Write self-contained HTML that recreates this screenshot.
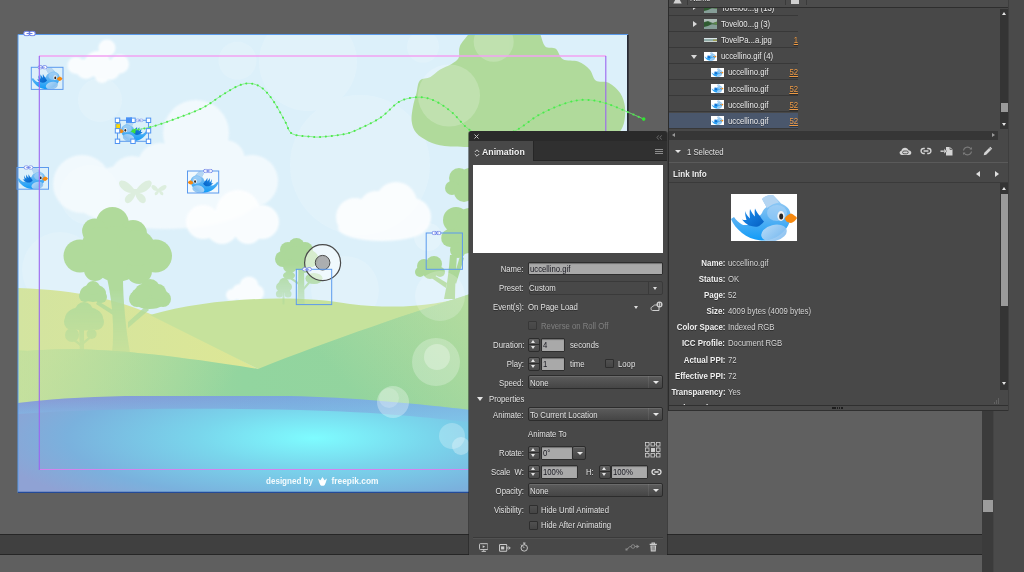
<!DOCTYPE html>
<html><head><meta charset="utf-8"><title>Animation</title>
<style>
*{box-sizing:border-box;margin:0;padding:0}
html,body{width:1024px;height:572px;overflow:hidden;background:#606060}
body{position:relative;font-family:"Liberation Sans",sans-serif;font-size:9px;color:#e2e2e2;line-height:1}
.a{position:absolute}
.t{position:absolute;white-space:nowrap;display:block;transform:scaleX(.86);transform-origin:0 50%;line-height:12px;height:12px;font-size:9px;text-shadow:0 1px 0 rgba(0,0,0,.4)}
.r{transform-origin:100% 50%;text-align:right}
.b{font-weight:bold}
.f{position:absolute;background:#a9a9a9;border:1px solid #2e2e2e;border-radius:1px;box-shadow:inset 0 1px 1px rgba(0,0,0,.35)}
.f .t{color:#1a1a22;text-shadow:none;left:.5px;top:0}
.dd{position:absolute;border:1px solid #2c2c2c;border-radius:2px;background:linear-gradient(90deg,transparent calc(100% - 14px),rgba(255,255,255,.07) calc(100% - 14px),rgba(255,255,255,.07) calc(100% - 13px),transparent calc(100% - 13px)),linear-gradient(#5c5c5c,#454545);box-shadow:inset 0 1px 0 rgba(255,255,255,.1)}
.dd .t{left:1px;top:.8px}
.dd i{position:absolute;right:2.8px;top:4.5px;border:3px solid transparent;border-top:3.5px solid #e8e8e8;border-bottom:0}
.st{position:absolute;width:12px;height:14px;border:1px solid #2c2c2c;border-radius:2px;background:linear-gradient(#606060,#4a4a4a)}
.st:before{content:"";position:absolute;left:2.5px;top:1.5px;border:2.5px solid transparent;border-bottom:3px solid #e4e4e4;border-top:0}
.st:after{content:"";position:absolute;left:2.5px;bottom:1.5px;border:2.5px solid transparent;border-top:3px solid #e4e4e4;border-bottom:0}
.cb{position:absolute;width:9px;height:9px;border:1px solid #2e2e2e;border-radius:1px;background:linear-gradient(#505050,#454545)}
.st i{position:absolute;left:0;right:0;top:5.5px;height:1px;background:#2c2c2c}
</style></head><body>
<!--ART-->
<svg class="a" style="left:18px;top:35px" width="610" height="457" viewBox="18 35 610 457">
<defs>
<filter id="bl1" x="-20%" y="-20%" width="140%" height="140%"><feGaussianBlur stdDeviation="2.2"/></filter>
<filter id="bl2" x="-20%" y="-20%" width="140%" height="140%"><feGaussianBlur stdDeviation="1"/></filter>
<radialGradient id="wg" cx="314" cy="438" r="330" gradientUnits="userSpaceOnUse" gradientTransform="translate(0 328.5) scale(1 0.25)">
<stop offset="0" stop-color="#7efcff"/><stop offset=".35" stop-color="#79d6ec"/><stop offset=".75" stop-color="#7ab1dd"/><stop offset="1" stop-color="#8fa2d4"/></radialGradient>
<linearGradient id="wt" x1="0" y1="0" x2="1" y2="0"><stop offset="0" stop-color="#8a97d3"/><stop offset=".45" stop-color="#7ba8dd"/><stop offset="1" stop-color="#7fbde4"/></linearGradient><linearGradient id="wf" x1="0" y1="0" x2="0" y2="1"><stop offset="0" stop-color="#7fc4e8" stop-opacity="0"/><stop offset="1" stop-color="#7fc8ea" stop-opacity=".85"/></linearGradient><linearGradient id="gr" gradientUnits="userSpaceOnUse" x1="480" y1="290" x2="360" y2="400"><stop offset="0" stop-color="#cfe39f" stop-opacity=".6"/><stop offset="1" stop-color="#cfe39f" stop-opacity="0"/></linearGradient><linearGradient id="gv" gradientUnits="userSpaceOnUse" x1="60" y1="340" x2="200" y2="430"><stop offset="0" stop-color="#cfe39f" stop-opacity=".6"/><stop offset="1" stop-color="#cfe39f" stop-opacity="0"/></linearGradient>
<linearGradient id="gg" x1="0" y1="0" x2="1" y2="0"><stop offset="0" stop-color="#b4dc9c"/><stop offset=".5" stop-color="#92d59f"/><stop offset="1" stop-color="#93d39d"/></linearGradient>
<linearGradient id="h1" x1="0" y1="0" x2="1" y2="0"><stop offset="0" stop-color="#d3e4a0"/><stop offset="1" stop-color="#dde796"/></linearGradient>
</defs>
<rect x="18" y="35" width="610" height="457" fill="#dcf0fa"/>
<!-- sky bokeh -->
<g fill="#fff" opacity=".15">
<circle cx="90" cy="195" r="30"/><circle cx="308" cy="62" r="49"/><circle cx="237.500" cy="60.700" r="19"/><circle cx="341.400" cy="160" r="22"/><circle cx="360" cy="165" r="70"/><circle cx="60" cy="270" r="38"/><circle cx="345" cy="290" r="34"/><circle cx="423" cy="46.600" r="16"/><circle cx="100" cy="100" r="22"/>
</g>
<!-- clouds -->
<g fill="#fff" filter="url(#bl2)" opacity=".62">
<circle cx="196" cy="133" r="33"/><circle cx="82" cy="184" r="29"/><circle cx="252" cy="181" r="26"/><circle cx="132" cy="178" r="22"/><ellipse cx="165" cy="195" rx="95" ry="34"/><circle cx="160" cy="165" r="22"/><circle cx="225" cy="160" r="20"/>
</g>
<g fill="#fff" filter="url(#bl2)" opacity=".85">
<circle cx="107" cy="48" r="8.500"/><circle cx="76" cy="65.500" r="8.500"/><circle cx="119.500" cy="64" r="9.500"/><circle cx="97.500" cy="64" r="13"/><circle cx="102" cy="76" r="7"/><circle cx="86" cy="69" r="10"/><circle cx="110" cy="70" r="10"/>
<circle cx="203" cy="222" r="17"/><circle cx="238" cy="212" r="22"/><circle cx="262" cy="222" r="17"/><circle cx="222" cy="228" r="16"/><circle cx="248" cy="230" r="14"/>
<circle cx="240" cy="292" r="8"/><circle cx="249" cy="286" r="9.500"/><circle cx="256" cy="293" r="8"/><circle cx="232" cy="295" r="6"/><circle cx="246" cy="297" r="7"/>
<circle cx="355" cy="217" r="19"/><circle cx="396" cy="203" r="21"/><circle cx="376" cy="208" r="17"/><circle cx="412" cy="217" r="19"/><ellipse cx="382" cy="228" rx="44" ry="13"/>
</g>
<g fill="#b9dca6" opacity=".35"><g transform="translate(134 189) scale(1.35) translate(-128 -190)"><path d="M128 190c-4-6-10-8-11-5s4 8 9 8c-4 1-6 5-4 7s6-2 7-6c1 4 5 8 7 6s0-6-4-7c5 0 10-5 9-8s-7-1-11 5z"/></g><path d="M158 189c-2-4-6-5-6.500-3s2 5 5.500 5c-2 .5-3 3-2 4s3.500-1 4-3.500c.5 2.500 3 4.500 4 3.500s0-3.500-2-4c3 0 6-3 5.500-5s-4.500-1-8.500 3z"/></g>
<!-- big tree top right -->
<path d="M469 147C464.9 146.8 451.4 146.9 444.6 146C437.9 145.1 433.2 143.7 428.5 141.5C423.8 139.3 419.2 136.4 416.4 133.1C413.6 129.8 412.3 125.7 411.7 121.4C411.1 117.1 412.1 112.0 412.9 107.3C413.7 102.6 415.2 97.8 416.4 93.3C417.6 88.8 417.5 83.1 419.9 80.4C422.2 77.7 427.2 78.7 430.5 76.9C433.8 75.1 436.3 72.0 439.8 69.8C443.3 67.6 448.5 66.0 451.6 64C454.7 62.0 457.2 61.0 458.6 58.1C460.0 55.2 458.2 50.2 459.8 46.4C461.4 42.5 466.6 36.9 468 35L540.6 35C541.4 36.9 542.8 44.1 545.3 46.4C547.8 48.7 552.9 46.6 555.8 48.7C558.7 50.9 559.2 57.1 562.9 59.3C566.6 61.4 573.6 59.9 578.1 61.6C582.6 63.4 586.9 66.7 589.8 69.8C592.7 72.9 592.6 78.2 595.7 80.4C598.8 82.6 604.5 80.6 608.6 82.7C612.7 84.8 617.6 89.2 620.3 93.3C623.0 97.4 624.4 102.2 625 107.3C625.6 112.4 625.0 119.1 623.8 123.7C622.6 128.3 620.3 130.6 618 135C615.7 139.4 611.3 147.5 610 150L610 200L469 200z" fill="#b0da9b"/>
<g fill="#fff" opacity=".2"><circle cx="449" cy="95.500" r="31"/><circle cx="493.700" cy="41.700" r="20"/></g>
<g fill="#acd898">
<circle cx="459" cy="178" r="10"/><circle cx="452" cy="188" r="7"/><circle cx="464" cy="192" r="10"/><circle cx="470" cy="180" r="12"/>
<circle cx="456" cy="220" r="13"/><circle cx="450" cy="238" r="9"/><circle cx="463" cy="240" r="14"/><circle cx="470" cy="222" r="14"/><circle cx="458" cy="250" r="8"/>
<circle cx="424" cy="266" r="7"/><circle cx="434" cy="264" r="8"/><circle cx="420" cy="272" r="5"/><circle cx="440" cy="272" r="5"/><circle cx="430" cy="272" r="7"/>
<path d="M450 255 L457 255 C456 270 455 285 455 299 L444 299 C447 285 449 270 450 255z"/><path d="M432 274 L447 283 L446 288 L430 277z"/><path d="M464 258 L456 284 L453 280 L460 256z"/>
</g>
<circle cx="428" cy="237" r="14" fill="#fff" opacity=".22"/>
<!-- hills -->
<path d="M18 288 C80 290 120 300 160 318 C200 336 230 355 258 369 L18 369z" fill="url(#h1)"/>
<path d="M150 315 C210 298 290 294 350 304 C400 310 440 305 470 295 L470 420 L18 420 L18 350 L258 369z" fill="#c6e29c"/>
<path d="M18 352 C80 345 150 352 258 369 C330 340 420 310 470 294 L470 420 L18 420z" fill="url(#gg)"/>
<!-- trees -->
<linearGradient id="tf" gradientUnits="userSpaceOnUse" x1="0" y1="290" x2="0" y2="358"><stop offset="0" stop-color="#fff"/><stop offset="1" stop-color="#555"/></linearGradient><linearGradient id="tf2" gradientUnits="userSpaceOnUse" x1="0" y1="265" x2="0" y2="306"><stop offset="0" stop-color="#fff"/><stop offset="1" stop-color="#666"/></linearGradient><mask id="fm2" maskUnits="userSpaceOnUse" x="260" y="230" width="80" height="80"><rect x="260" y="230" width="80" height="80" fill="url(#tf2)"/></mask><mask id="fm" maskUnits="userSpaceOnUse" x="18" y="200" width="300" height="200"><rect x="18" y="200" width="300" height="200" fill="url(#tf)"/></mask>
<g fill="#b0da9b">
<circle cx="112.400" cy="223.500" r="16.500"/><circle cx="94.600" cy="231" r="12.500"/><circle cx="133" cy="234" r="14"/><circle cx="80" cy="256" r="16.500"/><circle cx="155.500" cy="256" r="16.500"/><circle cx="117" cy="254" r="28"/><circle cx="95" cy="270" r="11"/><circle cx="139" cy="271" r="13"/><circle cx="100" cy="245" r="18"/><circle cx="137" cy="248" r="18"/>
<ellipse cx="93" cy="293" rx="13" ry="9"/><circle cx="85" cy="296" r="6"/><circle cx="101" cy="297" r="6"/><circle cx="93" cy="288" r="7"/>
<ellipse cx="149.600" cy="297" rx="19" ry="12"/><circle cx="150" cy="289" r="10"/><circle cx="137" cy="299" r="8"/><circle cx="163" cy="299" r="8"/><circle cx="143" cy="292" r="8"/><circle cx="158" cy="292" r="8"/>
</g>
<g fill="#b0da9b" mask="url(#fm)">
<path d="M107 278 L123 278 C123 300 126 330 130 353 L112 353 C115 330 112 300 107 278z"/>
<path d="M98 301 L116 312 L116 317 L96 304z"/><path d="M146 306 L128 322 L128 328 L149 310z"/>
<ellipse cx="84" cy="318.400" rx="19" ry="12"/><circle cx="84" cy="311" r="9"/><circle cx="72" cy="322" r="8"/><circle cx="96" cy="322" r="8"/><circle cx="72" cy="335" r="7"/><circle cx="91.600" cy="334" r="5"/>
<path d="M79 326 L84 326 L84 357 L80 357z"/><path d="M72 337l8 6v3l-9-7zM91 335l-7 6v3l8-7z"/>
</g>
<g fill="#acd89a" mask="url(#fm2)">
<circle cx="296.500" cy="246" r="8"/><circle cx="288" cy="250" r="8"/><circle cx="305" cy="250" r="8"/><circle cx="283" cy="259" r="8"/><circle cx="310" cy="259" r="8.500"/><circle cx="296.500" cy="258" r="12"/><circle cx="290" cy="266" r="7"/><circle cx="304" cy="266" r="7"/>
<path d="M298.500 266 L304 266 L304.500 304 L297.500 304z"/>
<ellipse cx="289" cy="275.500" rx="6" ry="4"/><ellipse cx="314" cy="278.500" rx="8.600" ry="5.500"/><path d="M291 277l7 5v2.500l-8-5.500zM311 282l-7 8v-3l5-6z"/>
<ellipse cx="284" cy="287" rx="8" ry="6"/><circle cx="284" cy="283" r="5"/><circle cx="279.400" cy="294" r="3.500"/><circle cx="288" cy="294" r="3.500"/><path d="M282.500 290h2v14.500h-2z"/>
</g>

<path d="M18 352 C80 345 150 352 258 369 C330 340 420 310 470 294 L470 420 L18 420z" fill="url(#gv)"/>
<path d="M258 369 C330 340 420 310 470 294 L470 420 L258 420z" fill="url(#gr)"/>
<!-- water -->
<path d="M18 403 C60 398 100 396 140 396 L290 396 C350 397 420 404 470 410 L628 410 L628 492 L18 492z" fill="url(#wt)"/>
<path d="M18 403 C60 398 100 396 140 396 L290 396 C350 397 420 404 470 410 L470 424 L18 416z" fill="url(#wf)"/>
<path d="M18 414 C100 408 200 408 300 410 C380 412 430 418 470 422 L628 422 L628 492 L18 492z" fill="url(#wg)"/>
<!-- bokeh right -->
<g fill="#fff">
<circle cx="436" cy="362" r="24" opacity=".25"/><circle cx="437" cy="357" r="13" opacity=".3"/>
<circle cx="393" cy="402" r="16" opacity=".3"/><circle cx="389" cy="398" r="10" opacity=".2"/>
<circle cx="452" cy="436" r="13" opacity=".25"/><circle cx="461" cy="446" r="9" opacity=".3"/>
<circle cx="440" cy="296" r="25" opacity=".2"/>
</g>
</svg>
<!--STRIPS-->
<div class="a" style="left:0;top:534px;width:982px;height:21px;background:#404040;border-top:1px solid #262626;border-bottom:1px solid #262626"></div>
<div class="a" style="left:0;top:555px;width:982px;height:17px;background:#5f5f5f"></div>
<div class="a" style="left:982px;top:405px;width:12px;height:167px;background:#3b3b3b;border-right:1px solid #444"></div>
<div class="a" style="left:983px;top:500px;width:10px;height:12px;background:#9c9c9c"></div>
<div class="a" style="left:994px;top:0;width:30px;height:572px;background:#4a4a4a"></div>
<!--OVERLAY-->
<svg class="a" style="left:0;top:0" width="1024" height="572" viewBox="0 0 1024 572">
<defs>
<linearGradient id="bb" x1="0" y1="0" x2="0" y2="1"><stop offset="0" stop-color="#a6d2f5"/><stop offset=".5" stop-color="#5cb3f3"/><stop offset="1" stop-color="#109bf8"/></linearGradient>
<linearGradient id="bw" x1="0" y1="0" x2="1" y2="1"><stop offset="0" stop-color="#1e90ee"/><stop offset="1" stop-color="#0560c4"/></linearGradient>
<linearGradient id="bl" x1="0" y1="0" x2="1" y2="1"><stop offset="0" stop-color="#c4e0f8"/><stop offset="1" stop-color="#7ab8ee"/></linearGradient>
<symbol id="bird" viewBox="0 0 66 47">
<path d="M0 25L3 23C5 26 8 29 11 30.500 13 31.500 17 31 20 30 24 27 29 22 31 19 32 16 34 14 35.500 13L31 5C33 2.500 37 .5 42 1 45 4 48 7 50 9.500 56 12 60 16 59.500 22 59.500 29 56 35 50 40 44 45 36 47 30 46.500 22 45.500 16 43 11 39 6 35 2 30 0 25z" fill="url(#bb)"/>
<path d="M31 5C33 2.500 37 .5 42 1 44 3 46 6 48 8.500 44 9 40 11 36 14z" fill="#b4d5f2"/>
<path d="M14 17C15 20 17 22.500 19 24.500 18.500 21 18.500 18 19 15 20.500 18 22 20.500 24 22.500 23.500 19.500 23.500 17 24 14.500 25.500 17.500 27 20 29 22 30 24 31.500 26 33 27.500 31 30 29 31.500 27 32.500 24 33 21 32.500 18 31.500 15.500 30 13 28 11 25.500 12.500 26 14 26.200 15.500 26 14.500 23 14 20 14 17z" fill="url(#bw)"/>
<ellipse cx="43" cy="39" rx="13" ry="8" transform="rotate(-14 43 39)" fill="url(#bl)" opacity=".9"/>
<ellipse cx="46" cy="19" rx="10" ry="8" fill="#b0d6f6" opacity=".55"/>
<ellipse cx="50" cy="22" rx="3.600" ry="5" fill="#f2f2f2"/><ellipse cx="50.200" cy="22.500" rx="2" ry="3" fill="#262626"/>
<path d="M54 24C56 21.500 58 20 60 19.500 62.500 20.500 64.500 22 66 24 64.500 26.500 62.500 28.200 60 29 58 28.800 56 28 55 27 54.300 26 54 25 54 24z" fill="#f7890f"/>
</symbol>
<symbol id="lnk" viewBox="0 0 11 5"><rect x=".6" y=".6" width="5" height="3.800" rx="1.900" fill="#fff" stroke="#6a7fe8" stroke-width=".9"/><rect x="5.400" y=".6" width="5" height="3.800" rx="1.900" fill="#fff" stroke="#6a7fe8" stroke-width=".9"/><path d="M3 2.500h5" stroke="#6a7fe8" stroke-width=".9"/></symbol>
</defs>
<path d="M18 492.500V34.500H628" fill="none" stroke="#5a9aea" stroke-width="1"/>
<path d="M18 492.300H628" fill="none" stroke="#234a98" stroke-width="1.200"/>
<path d="M627.800 35V493" fill="none" stroke="#0a0a14" stroke-width="1.300"/>
<use href="#lnk" x="23" y="30.500" width="13" height="6"/>
<g font-family="Liberation Sans, sans-serif" font-weight="bold" font-size="8.500" fill="#fff" opacity=".92"><text x="266" y="484" textLength="47" lengthAdjust="spacingAndGlyphs">designed by</text><text x="331.500" y="484" textLength="47" lengthAdjust="spacingAndGlyphs">freepik.com</text></g>
<path d="M319.500 483.500l-1.500-5 2.500 1.800 2-3.300 2 3.300 2.500-1.800-1.500 5z" fill="#fff" opacity=".95"/><circle cx="322.500" cy="483.200" r="2.600" fill="#fff"/>
<circle cx="322.600" cy="262.700" r="18" fill="rgba(255,255,255,.5)" stroke="#4a4a4a" stroke-width="1.200"/><circle cx="322.600" cy="262.700" r="7.300" fill="rgba(150,150,150,.75)" stroke="#4a4a4a" stroke-width="1"/>
<rect x="296.3" y="269.3" width="35.4" height="35.3" fill="none" stroke="#5b9aee" stroke-width="1"/>
<use href="#lnk" x="302" y="267.0" width="10" height="4.600"/>
<rect x="426.2" y="233" width="36.2" height="36.3" fill="none" stroke="#5b9aee" stroke-width="1"/>
<use href="#lnk" x="431.5" y="230.7" width="10" height="4.600"/>
<use href="#bird" x="31.3" y="67.3" width="31.7" height="22.1" preserveAspectRatio="none"/><rect x="31.3" y="67.3" width="31.7" height="22.1" fill="none" stroke="#5b9aee" stroke-width="1"/><use href="#lnk" x="37.5" y="65.0" width="10" height="4.600"/>
<use href="#bird" x="17" y="167.5" width="31.5" height="21.7" preserveAspectRatio="none"/><rect x="17" y="167.5" width="31.5" height="21.7" fill="none" stroke="#5b9aee" stroke-width="1"/><use href="#lnk" x="23.5" y="165.2" width="10" height="4.600"/>
<g transform="translate(406.2 0) scale(-1 1)"><use href="#bird" x="187.5" y="171" width="31.2" height="22.0" preserveAspectRatio="none"/></g><rect x="187.5" y="171" width="31.2" height="22.0" fill="none" stroke="#5b9aee" stroke-width="1"/><use href="#lnk" x="203" y="168.7" width="10" height="4.600"/>
<path d="M39 56H606" stroke="#f2a2f2" stroke-width="1.500" fill="none"/>
<path d="M39 469.500H606" stroke="#d384ee" stroke-width="1.200" fill="none"/>
<path d="M39.300 56V470M605.800 56V470" stroke="#9a66f0" stroke-width="1.100" fill="none"/>
<g transform="translate(266.0 0) scale(-1 1)"><use href="#bird" x="117.5" y="120.3" width="31.0" height="21.0" preserveAspectRatio="none"/></g><rect x="117.5" y="120.3" width="31.0" height="21.0" fill="none" stroke="#5b9aee" stroke-width="1"/>
<path d="M132.8 130.3C135.9 129.7 144.2 128.8 151.6 126.8C159.0 124.8 168.7 121.3 177.3 118.1C185.9 114.9 195.7 111.4 203.1 107.6C210.5 103.8 216.0 98.8 221.9 95.2C227.8 91.6 233.6 87.8 238.3 85.8C243.0 83.8 246.1 83.1 250 83.4C253.9 83.7 257.8 84.8 261.7 87.7C265.6 90.6 269.5 95.4 273.4 101C277.3 106.6 282.0 115.9 285.1 121.4C288.2 126.9 287.9 131.3 292.2 133.8C296.5 136.3 306.3 136.1 310.9 136.6C315.5 137.1 315.3 137.3 320 137C324.7 136.7 333.5 135.9 339 135C344.5 134.1 346.4 134.2 353.2 131.4C360.0 128.6 372.1 123.1 379.8 118.1C387.6 113.1 393.1 105.0 399.7 101.5C406.3 98.0 413.5 97.2 419.6 97.2C425.7 97.2 430.7 98.8 436.2 101.5C441.7 104.2 447.3 108.4 452.8 113.1C458.3 117.8 462.9 125.5 469.4 129.7C475.9 133.8 484.2 137.9 492 138C499.8 138.1 508.0 134.3 515.9 130.4C523.8 126.5 530.8 119.3 539.1 114.8C547.4 110.3 558.0 105.7 565.7 103.2C573.5 100.7 579.0 99.8 585.6 99.8C592.2 99.8 598.3 101.1 605.5 103.2C612.7 105.3 622.4 109.8 628.8 112.5C635.2 115.2 641.2 118.0 643.7 119.1" fill="none" stroke="#74ec74" stroke-width=".8"/>
<path d="M132.8 130.3C135.9 129.7 144.2 128.8 151.6 126.8C159.0 124.8 168.7 121.3 177.3 118.1C185.9 114.9 195.7 111.4 203.1 107.6C210.5 103.8 216.0 98.8 221.9 95.2C227.8 91.6 233.6 87.8 238.3 85.8C243.0 83.8 246.1 83.1 250 83.4C253.9 83.7 257.8 84.8 261.7 87.7C265.6 90.6 269.5 95.4 273.4 101C277.3 106.6 282.0 115.9 285.1 121.4C288.2 126.9 287.9 131.3 292.2 133.8C296.5 136.3 306.3 136.1 310.9 136.6C315.5 137.1 315.3 137.3 320 137C324.7 136.7 333.5 135.9 339 135C344.5 134.1 346.4 134.2 353.2 131.4C360.0 128.6 372.1 123.1 379.8 118.1C387.6 113.1 393.1 105.0 399.7 101.5C406.3 98.0 413.5 97.2 419.6 97.2C425.7 97.2 430.7 98.8 436.2 101.5C441.7 104.2 447.3 108.4 452.8 113.1C458.3 117.8 462.9 125.5 469.4 129.7C475.9 133.8 484.2 137.9 492 138C499.8 138.1 508.0 134.3 515.9 130.4C523.8 126.5 530.8 119.3 539.1 114.8C547.4 110.3 558.0 105.7 565.7 103.2C573.5 100.7 579.0 99.8 585.6 99.8C592.2 99.8 598.3 101.1 605.5 103.2C612.7 105.3 622.4 109.8 628.8 112.5C635.2 115.2 641.2 118.0 643.7 119.1" fill="none" stroke="#4ce94c" stroke-width="2" stroke-linecap="round" stroke-dasharray="0.1 5.800"/>
<circle cx="643.700" cy="119.100" r="1.800" fill="#2fe62f"/>
<path d="M130.500 131.600l5.500-3.600-.8 5.800z" fill="#3fe03f"/>
<use href="#lnk" x="135.500" y="118.200" width="8" height="4.200" opacity=".8"/>
<rect x="115.3" y="118.1" width="4.400" height="4.400" fill="#fff" stroke="#4f93f2" stroke-width="1"/>
<rect x="115.3" y="128.6" width="4.400" height="4.400" fill="#fff" stroke="#4f93f2" stroke-width="1"/>
<rect x="115.3" y="139.1" width="4.400" height="4.400" fill="#fff" stroke="#4f93f2" stroke-width="1"/>
<rect x="130.8" y="118.1" width="4.400" height="4.400" fill="#fff" stroke="#4f93f2" stroke-width="1"/>
<rect x="130.8" y="139.1" width="4.400" height="4.400" fill="#fff" stroke="#4f93f2" stroke-width="1"/>
<rect x="146.3" y="118.1" width="4.400" height="4.400" fill="#fff" stroke="#4f93f2" stroke-width="1"/>
<rect x="146.3" y="128.6" width="4.400" height="4.400" fill="#fff" stroke="#4f93f2" stroke-width="1"/>
<rect x="146.3" y="139.1" width="4.400" height="4.400" fill="#fff" stroke="#4f93f2" stroke-width="1"/>
<rect x="126" y="117.300" width="6" height="5.600" fill="#4a92f6"/>
<rect x="115.800" y="123.800" width="4.600" height="4.600" fill="#ffd800" stroke="#4f93f2" stroke-width=".8"/>
</svg>
<!--ANIM-->
<div class="a" id="anim" style="left:469px;top:131px;width:198px;height:424px;background:#484848;border-radius:3px 3px 0 0;overflow:hidden;box-shadow:-1px 0 0 rgba(30,30,30,.5),1px 0 0 rgba(30,30,30,.5)">
<div class="a" style="left:0;top:0;width:198px;height:10px;background:#2a2a2a"></div>
<div class="a" style="left:64px;top:10px;width:134px;height:20px;background:#303030;border-bottom:1px solid #262626;border-left:1px solid #262626"></div>
<svg class="a" style="left:4px;top:2px" width="8" height="7" viewBox="0 0 8 7"><path d="M1.5 1.5 L5.5 5.5 M5.5 1.5 L1.5 5.5" stroke="#c4c4c4" stroke-width="1" fill="none"/></svg>
<svg class="a" style="left:187px;top:3.500px" width="7" height="5" viewBox="0 0 8 6"><path d="M3 .5 L1 3 L3 5.5 M6.5 .5 L4.5 3 L6.5 5.5" stroke="#787878" stroke-width="1" fill="none"/></svg>
<svg class="a" style="left:5px;top:17.500px" width="6" height="8" viewBox="0 0 6 8"><path d="M.8 3 L3 .8 L5.2 3 M.8 5 L3 7.2 L5.2 5" stroke="#cccccc" stroke-width="1" fill="none"/></svg>
<span class="t b" style="left:13px;top:14.800px;font-size:9.5px;transform:scaleX(.92);color:#f0f0f0">Animation</span>
<div class="a" style="left:186px;top:18px;width:8px;height:1px;background:#8c8c8c;box-shadow:0 2px 0 #8c8c8c,0 4px 0 #8c8c8c"></div>
<div class="a" style="left:4px;top:34px;width:190px;height:88px;background:#fff"></div>
<span class="t r " style="right:143px;top:131.5px;">Name:</span>
<div class="f" style="left:59.3px;top:130.8px;width:134.7px;height:13.5px"><span class="t" style="top:0px">uccellino.gif</span></div>
<span class="t r " style="right:143px;top:151.0px;">Preset:</span>
<div class="a" style="left:60px;top:150px;width:134px;height:14px;border:1px solid #3a3a3a;border-radius:2px"></div><div class="a" style="left:179px;top:151px;width:1px;height:12px;background:#3a3a3a"></div><i class="a" style="left:184px;top:156px;border:2.5px solid transparent;border-top:3px solid #ddd;border-bottom:0"></i>
<span class="t " style="left:60px;top:151.0px;">Custom</span>
<span class="t r " style="right:143px;top:170.0px;">Event(s):</span>
<span class="t " style="left:59px;top:170.0px;">On Page Load</span>
<i class="a" style="left:165px;top:175px;border:2.5px solid transparent;border-top:3px solid #ddd;border-bottom:0"></i>
<svg class="a" style="left:181px;top:170px" width="13" height="11" viewBox="0 0 13 11"><path d="M1 7.5c0-1.2 1-2 2-2 .3-1 1.2-1.5 2.2-1.5H9v5.5H2.5C1.600 9.500 1 8.600 1 7.500z" fill="none" stroke="#cfcfcf" stroke-width="1"/><circle cx="9.500" cy="3.500" r="3" fill="#cfcfcf"/><path d="M8.600 2v3M10.400 2v3" stroke="#484848" stroke-width=".8"/></svg>
<div class="cb" style="left:59px;top:190.0px;opacity:.6"></div>
<span class="t " style="left:72px;top:189.0px;color:#808080;text-shadow:none">Reverse on Roll Off</span>
<span class="t r " style="right:142.5px;top:207.5px;">Duration:</span>
<div class="st" style="left:58.5px;top:206.5px"><i></i></div>
<div class="f" style="left:72px;top:206.5px;width:24px;height:14px"><span class="t" style="top:0px">4</span></div>
<span class="t " style="left:101px;top:208.0px;">seconds</span>
<span class="t r " style="right:142.5px;top:226.5px;">Play:</span>
<div class="st" style="left:58.5px;top:225.5px"><i></i></div>
<div class="f" style="left:72px;top:225.5px;width:24px;height:14px"><span class="t" style="top:0px">1</span></div>
<span class="t " style="left:101px;top:227.0px;">time</span>
<div class="cb" style="left:136.3px;top:228.0px;"></div>
<span class="t " style="left:149px;top:227.0px;">Loop</span>
<span class="t r " style="right:143px;top:245.7px;">Speed:</span>
<div class="dd" style="left:59.3px;top:244.3px;width:134.7px;height:13.5px"><span class="t">None</span><i></i></div>
<i class="a" style="left:8px;top:266px;border:3.5px solid transparent;border-top:4px solid #e4e4e4;border-bottom:0"></i>
<span class="t " style="left:20px;top:261.6px;">Properties</span>
<span class="t r " style="right:143px;top:277.5px;">Animate:</span>
<div class="dd" style="left:59.3px;top:276.1px;width:134.7px;height:13.5px"><span class="t">To Current Location</span><i></i></div>
<span class="t " style="left:59px;top:297.0px;">Animate To</span>
<span class="t r " style="right:143px;top:315.7px;">Rotate:</span>
<div class="st" style="left:58.5px;top:314.7px"><i></i></div>
<div class="f" style="left:72px;top:314.7px;width:32px;height:14px"><span class="t" style="top:0px">0°</span></div>
<div class="dd" style="left:103px;top:314.700px;width:14px;height:14px;background:linear-gradient(#5c5c5c,#454545)"><i style="right:2.500px;top:5px"></i></div>
<svg class="a" style="left:176px;top:311px" width="16" height="16" viewBox="0 0 16 16"><rect x="0.5" y="0.5" width="3.500" height="3.500" fill="none" stroke="#d0d0d0" stroke-width=".8"/><rect x="6.0" y="0.5" width="3.500" height="3.500" fill="none" stroke="#d0d0d0" stroke-width=".8"/><rect x="11.5" y="0.5" width="3.500" height="3.500" fill="none" stroke="#d0d0d0" stroke-width=".8"/><rect x="0.5" y="6.0" width="3.500" height="3.500" fill="none" stroke="#d0d0d0" stroke-width=".8"/><rect x="6.0" y="6.0" width="4" height="4" fill="#cccccc"/><rect x="11.5" y="6.0" width="3.500" height="3.500" fill="none" stroke="#d0d0d0" stroke-width=".8"/><rect x="0.5" y="11.5" width="3.500" height="3.500" fill="none" stroke="#d0d0d0" stroke-width=".8"/><rect x="6.0" y="11.5" width="3.500" height="3.500" fill="none" stroke="#d0d0d0" stroke-width=".8"/><rect x="11.5" y="11.5" width="3.500" height="3.500" fill="none" stroke="#d0d0d0" stroke-width=".8"/><path d="M4 2.200h1.500M9.500 2.200H11M4 13.200h1.500M9.500 13.200H11M2.200 4v1.500M2.200 9.500V11M13.200 4v1.500M13.200 9.500V11" stroke="#bbb" stroke-width=".7"/></svg>
<span class="t " style="left:22px;top:334.6px;">Scale</span>
<span class="t r " style="right:143px;top:334.6px;">W:</span>
<div class="st" style="left:58.5px;top:333.6px"><i></i></div>
<div class="f" style="left:72px;top:333.6px;width:37px;height:14px"><span class="t" style="top:0px">100%</span></div>
<span class="t " style="left:117px;top:334.6px;">H:</span>
<div class="st" style="left:129.5px;top:333.6px"><i></i></div>
<div class="f" style="left:142px;top:333.6px;width:37px;height:14px"><span class="t" style="top:0px">100%</span></div>
<svg class="a" style="left:182px;top:336.500px" width="11" height="8" viewBox="0 0 11 8"><path d="M4.300 1.600H3.400a2.400 2.400 0 0 0 0 4.800h.9M6.700 1.600h.9a2.400 2.400 0 0 1 0 4.800h-.9M3.400 4h4.200" fill="none" stroke="#e0e0e0" stroke-width="1.300"/></svg>
<span class="t r " style="right:143px;top:353.5px;">Opacity:</span>
<div class="dd" style="left:59.3px;top:352.1px;width:134.7px;height:13.5px"><span class="t">None</span><i></i></div>
<span class="t r " style="right:143px;top:372.7px;">Visibility:</span>
<div class="cb" style="left:59.5px;top:374.2px;"></div>
<span class="t " style="left:72px;top:372.7px;">Hide Until Animated</span>
<div class="cb" style="left:59.5px;top:389.7px;"></div>
<span class="t " style="left:72px;top:388.2px;">Hide After Animating</span>
<div class="a" style="left:4px;top:406px;width:190px;height:1px;background:#3a3a3a;box-shadow:0 1px 0 #525252"></div>
<svg class="a" style="left:9.500px;top:412px" width="9.500" height="9.500" viewBox="0 0 11 11"><rect x=".6" y=".8" width="9.800" height="6.800" rx="1" fill="none" stroke="#cccccc" stroke-width="1.100"/><path d="M4.300 2.600v3.200l2.800-1.600z" fill="#cccccc"/><path d="M5.500 7.600v1.600M3 9.700h5" stroke="#cccccc" stroke-width="1.100"/></svg>
<svg class="a" style="left:30px;top:412.500px" width="12" height="8.300" viewBox="0 0 13 9"><rect x=".6" y=".6" width="7.800" height="7.300" rx=".8" fill="none" stroke="#cccccc" stroke-width="1.100"/><rect x="2.200" y="2.600" width="3.500" height="3.300" fill="#cccccc"/><path d="M8.500 4.300h3.500M10.500 2.600l1.700 1.700-1.700 1.700" stroke="#cccccc" stroke-width="1" fill="none"/></svg>
<svg class="a" style="left:50.500px;top:411px" width="8.500" height="10.200" viewBox="0 0 10 12"><circle cx="5" cy="7" r="3.800" fill="none" stroke="#cccccc" stroke-width="1.100"/><path d="M5 7L3.200 5M3.500 1.200h3M5 1.200v2M1.200 3.200l1.300 1.300" stroke="#cccccc" stroke-width="1.100" fill="none"/></svg>
<svg class="a" style="left:156px;top:412px" width="16" height="8" viewBox="0 0 16 8"><path d="M1.500 6.500C3 6.500 3 3.500 6 3.500h8" stroke="#8a8a8a" stroke-width="1" fill="none"/><circle cx="8" cy="3.500" r="1.800" fill="#484848" stroke="#8a8a8a" stroke-width=".9"/><path d="M11.500 1.500l3 2-3 2z" fill="#8a8a8a"/><rect x=".5" y="5.500" width="2" height="2" fill="#8a8a8a"/></svg>
<svg class="a" style="left:179.500px;top:411px" width="8.500" height="10.200" viewBox="0 0 10 12"><path d="M.8 2.800h8.400M3.500 2.500V1.200h3v1.300" stroke="#cccccc" stroke-width="1.200" fill="none"/><path d="M1.600 4h6.800l-.5 7.200H2.100z" fill="#cccccc"/><path d="M3.700 5v5M5 5v5M6.300 5v5" stroke="#484848" stroke-width=".6"/></svg>
</div>
<!--LINKS-->
<div class="a" id="links" style="left:668px;top:0;width:341px;height:411px;background:#484848;border-left:1px solid #2c2c2c;border-right:1px solid #3e3e3e;overflow:hidden">
<div class="a" style="left:0;top:-0.55px;width:129px;height:16.15px;background:#484848;border-bottom:1px solid #383838"></div>
<i class="a" style="left:24px;top:4.3px;border:3.500px solid transparent;border-left:4px solid #d8d8d8;border-right:0"></i>
<svg class="a" style="left:35px;top:2.8px" width="13" height="10" viewBox="0 0 13 10"><rect width="13" height="10" fill="#4f7352"/><path d="M0 0h13v2.500L9 4 4 2 0 3z" fill="#aebdb8"/><path d="M0 7l5-2 8 1v4H0z" fill="#869e98"/><path d="M0 3.500l4-1 4 2.500-4 2-4 1z" fill="#2f5a30"/><path d="M9 4l4-1v3z" fill="#5f8a4a"/></svg>
<span class="t" style="left:51.5px;top:1.8px;color:#ececec">Tovel00...g (13)</span>
<div class="a" style="left:0;top:15.60px;width:129px;height:16.15px;background:#484848;border-bottom:1px solid #383838"></div>
<i class="a" style="left:24px;top:20.5px;border:3.500px solid transparent;border-left:4px solid #d8d8d8;border-right:0"></i>
<svg class="a" style="left:35px;top:19.0px" width="13" height="10" viewBox="0 0 13 10"><rect width="13" height="10" fill="#4f7352"/><path d="M0 0h13v2.500L9 4 4 2 0 3z" fill="#aebdb8"/><path d="M0 7l5-2 8 1v4H0z" fill="#869e98"/><path d="M0 3.500l4-1 4 2.500-4 2-4 1z" fill="#2f5a30"/><path d="M9 4l4-1v3z" fill="#5f8a4a"/></svg>
<span class="t" style="left:51.5px;top:18.0px;color:#ececec">Tovel00...g (3)</span>
<div class="a" style="left:0;top:31.75px;width:129px;height:16.15px;background:#484848;border-bottom:1px solid #383838"></div>
<svg class="a" style="left:35px;top:38.1px" width="13" height="4" viewBox="0 0 13 4"><rect width="13" height="4" fill="#7f9f9a"/><rect width="13" height="1.200" fill="#d9e4e8"/><rect y="2.800" width="13" height="1.200" fill="#c9d3cf"/><rect x="9" y="1.500" width="4" height="1.500" fill="#9a9a52"/></svg>
<span class="t" style="left:51.5px;top:34.1px;color:#ececec">TovelPa...a.jpg</span>
<span class="t r" style="right:210px;top:34.1px;color:#ee9a44;text-decoration:underline">1</span>
<div class="a" style="left:0;top:47.90px;width:129px;height:16.15px;background:#484848;border-bottom:1px solid #383838"></div>
<i class="a" style="left:21.5px;top:54.8px;border:3.500px solid transparent;border-top:4px solid #d8d8d8;border-bottom:0"></i>
<svg class="a" style="left:35px;top:51.8px" width="13" height="9" viewBox="0 0 13 9"><rect width="13" height="9" fill="#fff"/><use href="#bird" x=".3" y=".2" width="12.400" height="8.600" preserveAspectRatio="none"/></svg>
<span class="t" style="left:51.5px;top:50.3px;color:#ececec">uccellino.gif (4)</span>
<div class="a" style="left:0;top:64.05px;width:129px;height:16.15px;background:#484848;border-bottom:1px solid #383838"></div>
<svg class="a" style="left:42px;top:67.9px" width="13" height="9" viewBox="0 0 13 9"><rect width="13" height="9" fill="#fff"/><use href="#bird" x=".3" y=".2" width="12.400" height="8.600" preserveAspectRatio="none"/></svg>
<span class="t" style="left:58.5px;top:66.4px;color:#ececec">uccellino.gif</span>
<span class="t r" style="right:210px;top:66.4px;color:#ee9a44;text-decoration:underline">52</span>
<div class="a" style="left:0;top:80.20px;width:129px;height:16.15px;background:#484848;border-bottom:1px solid #383838"></div>
<svg class="a" style="left:42px;top:84.1px" width="13" height="9" viewBox="0 0 13 9"><rect width="13" height="9" fill="#fff"/><use href="#bird" x=".3" y=".2" width="12.400" height="8.600" preserveAspectRatio="none"/></svg>
<span class="t" style="left:58.5px;top:82.6px;color:#ececec">uccellino.gif</span>
<span class="t r" style="right:210px;top:82.6px;color:#ee9a44;text-decoration:underline">52</span>
<div class="a" style="left:0;top:96.35px;width:129px;height:16.15px;background:#484848;border-bottom:1px solid #383838"></div>
<svg class="a" style="left:42px;top:100.2px" width="13" height="9" viewBox="0 0 13 9"><rect width="13" height="9" fill="#fff"/><use href="#bird" x=".3" y=".2" width="12.400" height="8.600" preserveAspectRatio="none"/></svg>
<span class="t" style="left:58.5px;top:98.7px;color:#ececec">uccellino.gif</span>
<span class="t r" style="right:210px;top:98.7px;color:#ee9a44;text-decoration:underline">52</span>
<div class="a" style="left:0;top:112.50px;width:129px;height:16.15px;background:#4a576c;border-bottom:1px solid #383838"></div>
<svg class="a" style="left:42px;top:116.4px" width="13" height="9" viewBox="0 0 13 9"><rect width="13" height="9" fill="#fff"/><use href="#bird" x=".3" y=".2" width="12.400" height="8.600" preserveAspectRatio="none"/></svg>
<span class="t" style="left:58.5px;top:114.9px;color:#ececec">uccellino.gif</span>
<span class="t r" style="right:210px;top:114.9px;color:#ee9a44;text-decoration:underline">52</span>
<div class="a" style="left:0;top:0;width:340px;height:7.500px;background:#4c4c4c;border-bottom:1px solid #2e2e2e"></div>
<svg class="a" style="left:4px;top:-5.500px" width="9" height="9" viewBox="0 0 9 9"><path d="M4.500 .5L8.700 8.500H.3z" fill="#d0d0d0"/></svg>
<div class="a" style="left:18px;top:0;width:1px;height:5px;background:#3a3a3a"></div>
<span class="t" style="left:21px;top:-8.500px">Name</span>
<div class="a" style="left:116px;top:0;width:1px;height:5px;background:#3a3a3a"></div>
<div class="a" style="left:122px;top:-4px;width:8px;height:8px;background:#cfcfcf"></div>
<div class="a" style="left:137px;top:0;width:1px;height:5px;background:#3a3a3a"></div>
<div class="a" style="left:330.5px;top:9px;width:9.500px;height:120px;background:#343434"></div>
<i class="a" style="left:332.5px;top:12px;border:2.500px solid transparent;border-bottom:3px solid #e6e6e6;border-top:0"></i>
<i class="a" style="left:332.5px;top:122.500px;border:2.500px solid transparent;border-top:3px solid #e6e6e6;border-bottom:0"></i>
<div class="a" style="left:331.5px;top:103px;width:8px;height:8.500px;background:#9a9a9a"></div>
<div class="a" style="left:0;top:130.500px;width:329px;height:9.500px;background:#363636"></div>
<i class="a" style="left:3px;top:132.500px;border:2.500px solid transparent;border-right:3px solid #9a9a9a;border-left:0"></i>
<i class="a" style="left:323px;top:132.500px;border:2.500px solid transparent;border-left:3px solid #9a9a9a;border-right:0"></i>
<i class="a" style="left:6px;top:150px;border:3px solid transparent;border-top:3.500px solid #e4e4e4;border-bottom:0"></i>
<span class="t" style="left:17.5px;top:145.500px">1 Selected</span>
<svg class="a" style="left:229.5px;top:145.500px" width="13" height="10" viewBox="0 0 13 10"><path d="M3 9C1.500 9 .6 8 .6 6.800c0-1.100.8-1.900 1.800-2C2.700 3 4.200 1.800 6 1.800c1.700 0 3 1 3.500 2.500 1.500 0 2.800 1 2.800 2.400C12.300 8 11.300 9 10 9z" fill="#d4d4d4"/><rect x="3.600" y="5" width="5.600" height="2.800" rx="1.400" fill="none" stroke="#484848" stroke-width=".9"/></svg>
<svg class="a" style="left:251px;top:147px" width="12" height="8" viewBox="0 0 12 8"><path d="M4.800 1.500H3.600a2.500 2.500 0 0 0 0 5h1.200M7.200 1.500h1.200a2.500 2.500 0 0 1 0 5H7.200M3.600 4h4.800" fill="none" stroke="#d4d4d4" stroke-width="1.400"/></svg>
<svg class="a" style="left:271px;top:145.500px" width="13" height="10" viewBox="0 0 13 10"><path d="M6 1h4l2.500 2.500V9.500H6z" fill="#d4d4d4"/><path d="M10 1v2.500h2.500" fill="none" stroke="#484848" stroke-width=".7"/><path d="M.5 5.200h5" stroke="#d4d4d4" stroke-width="1.400"/><path d="M4 2.600l3 2.600-3 2.600z" fill="#d4d4d4" stroke="#484848" stroke-width=".4"/></svg>
<svg class="a" style="left:292.5px;top:145.500px" width="11" height="10" viewBox="0 0 11 10"><path d="M1.500 4.500A4 3.800 0 0 1 8.800 2.800M9.500 5.500A4 3.800 0 0 1 2.200 7.200" fill="none" stroke="#7c7c7c" stroke-width="1.100"/><path d="M7.500 3.500L10.200 3.600 9.600 1z" fill="#7c7c7c"/><path d="M3.500 6.500L.8 6.400 1.400 9z" fill="#7c7c7c"/></svg>
<svg class="a" style="left:314px;top:145.500px" width="10" height="10" viewBox="0 0 10 10"><path d="M7.300 .8l1.900 1.900L3.200 8.700.7 9.300l.6-2.500z" fill="#d4d4d4"/><path d="M6.300 1.800l1.900 1.900" stroke="#484848" stroke-width=".5"/></svg>
<div class="a" style="left:0;top:161.500px;width:340px;height:1px;background:#5a5a5a"></div>
<span class="t b" style="left:3.5px;top:168.300px;transform:scaleX(.9);color:#eee">Link Info</span>
<i class="a" style="left:307px;top:170.500px;border:3.500px solid transparent;border-right:4px solid #e0e0e0;border-left:0"></i>
<i class="a" style="left:326px;top:170.500px;border:3.500px solid transparent;border-left:4px solid #e0e0e0;border-right:0"></i>
<div class="a" style="left:0;top:182px;width:340px;height:1px;background:#3a3a3a"></div>
<div class="a" style="left:330.5px;top:183px;width:9.500px;height:206.500px;background:#343434"></div>
<i class="a" style="left:332.5px;top:186.500px;border:2.500px solid transparent;border-bottom:3px solid #e6e6e6;border-top:0"></i>
<i class="a" style="left:332.5px;top:382px;border:2.500px solid transparent;border-top:3px solid #e6e6e6;border-bottom:0"></i>
<div class="a" style="left:331.5px;top:194px;width:8px;height:112px;background:#9a9a9a"></div>
<svg class="a" style="left:62px;top:194px" width="66" height="47" viewBox="0 0 66 47"><rect width="66" height="47" fill="#fff"/><use href="#bird" x="0" y="0" width="66" height="47"/></svg>
<span class="t r b" style="right:282.70000000000005px;top:256.7px;transform:scaleX(.88);color:#f0f0f0">Name:</span>
<span class="t" style="left:59.299999999999955px;top:256.7px;color:#d6d6d6">uccellino.gif</span>
<span class="t r b" style="right:282.70000000000005px;top:272.8px;transform:scaleX(.88);color:#f0f0f0">Status:</span>
<span class="t" style="left:59.299999999999955px;top:272.8px;color:#d6d6d6">OK</span>
<span class="t r b" style="right:282.70000000000005px;top:289.0px;transform:scaleX(.88);color:#f0f0f0">Page:</span>
<span class="t" style="left:59.299999999999955px;top:289.0px;color:#d6d6d6">52</span>
<span class="t r b" style="right:282.70000000000005px;top:305.1px;transform:scaleX(.88);color:#f0f0f0">Size:</span>
<span class="t" style="left:59.299999999999955px;top:305.1px;color:#d6d6d6">4009 bytes (4009 bytes)</span>
<span class="t r b" style="right:282.70000000000005px;top:321.3px;transform:scaleX(.88);color:#f0f0f0">Color Space:</span>
<span class="t" style="left:59.299999999999955px;top:321.3px;color:#d6d6d6">Indexed RGB</span>
<span class="t r b" style="right:282.70000000000005px;top:337.4px;transform:scaleX(.88);color:#f0f0f0">ICC Profile:</span>
<span class="t" style="left:59.299999999999955px;top:337.4px;color:#d6d6d6">Document RGB</span>
<span class="t r b" style="right:282.70000000000005px;top:353.5px;transform:scaleX(.88);color:#f0f0f0">Actual PPI:</span>
<span class="t" style="left:59.299999999999955px;top:353.5px;color:#d6d6d6">72</span>
<span class="t r b" style="right:282.70000000000005px;top:369.7px;transform:scaleX(.88);color:#f0f0f0">Effective PPI:</span>
<span class="t" style="left:59.299999999999955px;top:369.7px;color:#d6d6d6">72</span>
<span class="t r b" style="right:282.70000000000005px;top:385.8px;transform:scaleX(.88);color:#f0f0f0">Transparency:</span>
<span class="t" style="left:59.299999999999955px;top:385.8px;color:#d6d6d6">Yes</span>
<span class="t r b" style="right:282.70000000000005px;top:402.0px;transform:scaleX(.88);color:#f0f0f0">Dimensions:</span>
<div class="a" style="left:0;top:405px;width:340px;height:6px;background:#4a4a4a;border-top:1px solid #303030;border-bottom:1px solid #303030"></div>
<div class="a" style="left:163px;top:407px;width:11px;height:2px;background:repeating-linear-gradient(90deg,#1e1e1e 0 1.500px,transparent 1.500px 2.300px)"></div>
<svg class="a" style="left:324px;top:398px" width="6" height="6" viewBox="0 0 6 6"><path d="M5.500 .5v1M3.500 2.500v1M5.500 2.500v1M1.500 4.500v1M3.500 4.500v1M5.500 4.500v1" stroke="#7a7a7a" stroke-width="1"/></svg>
</div>
</body></html>
